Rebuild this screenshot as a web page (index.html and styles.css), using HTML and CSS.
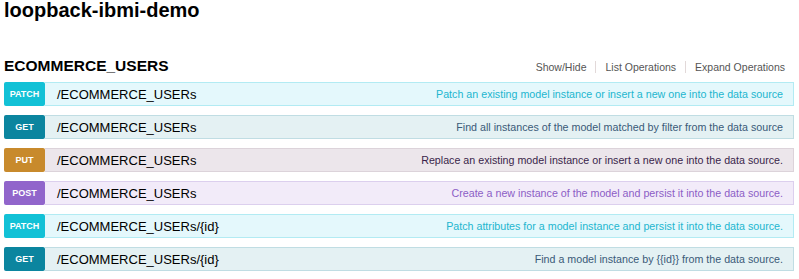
FILE: index.html
```html
<!DOCTYPE html>
<html lang="en">
<head>
    <meta charset="UTF-8">
    <meta name="viewport" content="width=device-width, initial-scale=1.0">
    <title>loopback-ibmi-demo</title>
    <link rel="stylesheet" href="styles.css">
</head>
<body>
    <div class="page">
        <h1 class="title">loopback-ibmi-demo</h1>

        <div class="resource">
            <div class="resource-head">
                <h2>ECOMMERCE_USERS</h2>
                <ul class="options">
                    <li><a href="#">Show/Hide</a></li>
                    <li><a href="#">List Operations</a></li>
                    <li><a href="#">Expand Operations</a></li>
                </ul>
            </div>

            <ul class="endpoints">
                <li class="op op-patch">
                    <span class="verb">PATCH</span>
                    <div class="heading">
                        <span class="path">/ECOMMERCE_USERs</span>
                        <span class="summary">Patch an existing model instance or insert a new one into the data source</span>
                    </div>
                </li>
                <li class="op op-get">
                    <span class="verb">GET</span>
                    <div class="heading">
                        <span class="path">/ECOMMERCE_USERs</span>
                        <span class="summary">Find all instances of the model matched by filter from the data source</span>
                    </div>
                </li>
                <li class="op op-put">
                    <span class="verb">PUT</span>
                    <div class="heading">
                        <span class="path">/ECOMMERCE_USERs</span>
                        <span class="summary">Replace an existing model instance or insert a new one into the data source.</span>
                    </div>
                </li>
                <li class="op op-post">
                    <span class="verb">POST</span>
                    <div class="heading">
                        <span class="path">/ECOMMERCE_USERs</span>
                        <span class="summary">Create a new instance of the model and persist it into the data source.</span>
                    </div>
                </li>
                <li class="op op-patch">
                    <span class="verb">PATCH</span>
                    <div class="heading">
                        <span class="path">/ECOMMERCE_USERs/{id}</span>
                        <span class="summary">Patch attributes for a model instance and persist it into the data source.</span>
                    </div>
                </li>
                <li class="op op-get">
                    <span class="verb">GET</span>
                    <div class="heading">
                        <span class="path">/ECOMMERCE_USERs/{id}</span>
                        <span class="summary">Find a model instance by {{id}} from the data source.</span>
                    </div>
                </li>
            </ul>
        </div>
    </div>
</body>
</html>
```

FILE: styles.css
```css
body {
    margin: 0;
    background-color: #fff;
    color: #000;
    font-family: 'Liberation Sans', Arial, sans-serif;
}

.page {
    padding: 0 5px 0 4px;
}

.title {
    margin: 0;
    font-size: 20px;
    line-height: 20px;
    font-weight: bold;
    color: #000;
}

.resource-head {
    display: flex;
    justify-content: space-between;
    align-items: baseline;
    margin-top: 36px;
    height: 20px;
}

.resource-head h2 {
    margin: 0;
    font-size: 15.5px;
    line-height: 20px;
    font-weight: bold;
    color: #000;
}

.options {
    list-style: none;
    margin: 0;
    padding: 0;
    display: flex;
    font-size: 10.5px;
    line-height: 12px;
}

.options li {
    padding: 0 9px;
    border-left: 1px solid #e2d9d9;
}

.options li:first-child {
    border-left: none;
}

.options a {
    color: #555;
    text-decoration: none;
}

.endpoints {
    list-style: none;
    margin: 6px 0 0;
    padding: 0;
    display: flex;
    flex-direction: column;
    gap: 9px;
}

.op {
    display: flex;
    height: 24px;
}

.verb {
    width: 41px;
    flex-shrink: 0;
    display: flex;
    align-items: center;
    justify-content: center;
    border-radius: 2px;
    color: #fff;
    font-size: 9px;
    font-weight: bold;
}

.heading {
    flex: 1;
    display: flex;
    align-items: center;
    justify-content: space-between;
    box-sizing: border-box;
    border: 1px solid;
    border-left: none;
    padding: 0 10px 0 12px;
}

.path {
    font-size: 13px;
    color: #000;
}

.summary {
    font-size: 10.7px;
}

/* colours per verb */
.op-patch .verb { background-color: #12c1d6; }
.op-patch .heading { background-color: #e4f8fc; border-color: #b2ebf3; }
.op-patch .summary { color: #22b6cf; }

.op-get .verb { background-color: #0b859f; }
.op-get .heading { background-color: #e4f1f3; border-color: #c0dde3; }
.op-get .summary { color: #3a5a78; }

.op-put .verb { background-color: #c88a2c; }
.op-put .heading { background-color: #ece6eb; border-color: #dcd3da; }
.op-put .summary { color: #3a1f4a; }

.op-post .verb { background-color: #9165cb; }
.op-post .heading { background-color: #f2ebf9; border-color: #dccfee; }
.op-post .summary { color: #8c5ec6; }
```
